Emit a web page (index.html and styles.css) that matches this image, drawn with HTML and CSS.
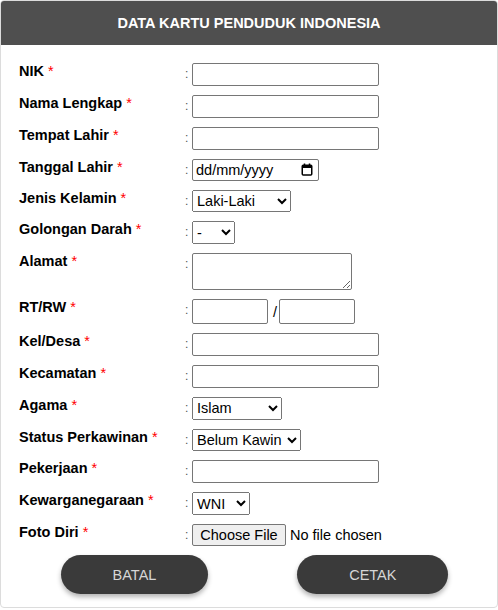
FILE: index.html
```html
<!DOCTYPE html>
<html lang="id">
<head>
<meta charset="utf-8">
<title>Data Kartu Penduduk Indonesia</title>
<link rel="stylesheet" href="styles.css">
</head>
<body>
<div class="card">
  <div class="card-header">DATA KARTU PENDUDUK INDONESIA</div>
  <form class="card-body">
    <div class="row">
      <label class="lbl">NIK <span class="req">*</span></label>
      <span class="colon">:</span>
      <input class="txt" type="text">
    </div>
    <div class="row">
      <label class="lbl">Nama Lengkap <span class="req">*</span></label>
      <span class="colon">:</span>
      <input class="txt" type="text">
    </div>
    <div class="row">
      <label class="lbl">Tempat Lahir <span class="req">*</span></label>
      <span class="colon">:</span>
      <input class="txt" type="text">
    </div>
    <div class="row">
      <label class="lbl">Tanggal Lahir <span class="req">*</span></label>
      <span class="colon">:</span>
      <div class="date-field">
        <span>dd/mm/yyyy</span>
        <svg class="cal" width="12" height="13" viewBox="0 0 12 13">
          <rect x="1.25" y="2.25" width="9.5" height="9.75" rx="1" fill="none" stroke="#000" stroke-width="1.5"/>
          <rect x="1" y="2" width="10" height="3" fill="#000"/>
          <rect x="2.75" y="0.5" width="1.5" height="2.5" fill="#000"/>
          <rect x="7.75" y="0.5" width="1.5" height="2.5" fill="#000"/>
        </svg>
      </div>
    </div>
    <div class="row">
      <label class="lbl">Jenis Kelamin <span class="req">*</span></label>
      <span class="colon">:</span>
      <select class="sel sel-jk"><option>Laki-Laki</option><option>Perempuan</option></select>
    </div>
    <div class="row">
      <label class="lbl">Golongan Darah <span class="req">*</span></label>
      <span class="colon">:</span>
      <select class="sel sel-gol"><option>-</option><option>A</option><option>B</option><option>AB</option><option>O</option></select>
    </div>
    <div class="row">
      <label class="lbl">Alamat <span class="req">*</span></label>
      <span class="colon">:</span>
      <textarea class="area"></textarea>
    </div>
    <div class="row">
      <label class="lbl">RT/RW <span class="req">*</span></label>
      <span class="colon">:</span>
      <div class="rtrw">
        <input class="txt small" type="text">
        <span class="slash">/</span>
        <input class="txt small" type="text">
      </div>
    </div>
    <div class="row">
      <label class="lbl">Kel/Desa <span class="req">*</span></label>
      <span class="colon">:</span>
      <input class="txt" type="text">
    </div>
    <div class="row">
      <label class="lbl">Kecamatan <span class="req">*</span></label>
      <span class="colon">:</span>
      <input class="txt" type="text">
    </div>
    <div class="row">
      <label class="lbl">Agama <span class="req">*</span></label>
      <span class="colon">:</span>
      <select class="sel sel-agama"><option>Islam</option><option>Kristen</option><option>Katolik</option><option>Hindu</option><option>Buddha</option><option>Konghucu</option></select>
    </div>
    <div class="row">
      <label class="lbl">Status Perkawinan <span class="req">*</span></label>
      <span class="colon">:</span>
      <select class="sel sel-status"><option>Belum Kawin</option><option>Kawin</option><option>Cerai Hidup</option><option>Cerai Mati</option></select>
    </div>
    <div class="row">
      <label class="lbl">Pekerjaan <span class="req">*</span></label>
      <span class="colon">:</span>
      <input class="txt" type="text">
    </div>
    <div class="row">
      <label class="lbl">Kewarganegaraan <span class="req">*</span></label>
      <span class="colon">:</span>
      <select class="sel sel-wn"><option>WNI</option><option>WNA</option></select>
    </div>
    <div class="row">
      <label class="lbl">Foto Diri <span class="req">*</span></label>
      <span class="colon">:</span>
      <div class="file-field">
        <span class="file-btn">Choose File</span>
        <span class="file-name">No file chosen</span>
      </div>
    </div>
    <div class="actions">
      <button type="button" class="btn btn-batal">BATAL</button>
      <button type="button" class="btn btn-cetak">CETAK</button>
    </div>
  </form>
</div>
</body>
</html>
```

FILE: styles.css
```css
html, body {
  margin: 0;
  padding: 0;
  background: #fff;
}

body {
  font-family: "Liberation Sans", Arial, sans-serif;
  font-size: 14.5px;
  color: #000;
}

.card {
  box-sizing: border-box;
  width: 498px;
  height: 608px;
  border: 1px solid #dcdcdc;
  border-radius: 4px;
  overflow: hidden;
  background: #fff;
}

.card-header {
  height: 44px;
  background: #4f4f4f;
  color: #fff;
  font-weight: bold;
  font-size: 14.5px;
  display: flex;
  align-items: center;
  justify-content: center;
}

.card-body {
  margin: 0;
  padding: 17.7px 18px 14px 18px;
  display: flex;
  flex-direction: column;
  gap: 9px;
}

.row {
  display: flex;
  align-items: flex-start;
}

.lbl {
  width: 166px;
  flex: none;
  font-weight: bold;
  line-height: normal;
}

.req {
  color: #f00;
  font-weight: normal;
}

.colon {
  width: 7px;
  flex: none;
  font-size: 12px;
  line-height: 12px;
  margin-top: 5px;
  color: #555;
}

.txt {
  box-sizing: border-box;
  width: 187px;
  height: 23px;
  margin: 0;
  padding: 1px 3px;
  border: 1px solid #767676;
  border-radius: 2px;
  font-family: inherit;
  font-size: 14.5px;
  background: #fff;
}

.txt.small {
  width: 76px;
  height: 25px;
}

.rtrw {
  display: flex;
  align-items: center;
}

.slash {
  margin: 0 2px 0 5px;
  font-size: 14.5px;
}

.date-field {
  box-sizing: border-box;
  width: 127px;
  height: 22px;
  border: 1px solid #767676;
  border-radius: 2px;
  display: flex;
  align-items: center;
  justify-content: space-between;
  padding: 0 5px 0 3px;
  font-size: 14.5px;
}

.cal {
  display: block;
}

.sel {
  box-sizing: border-box;
  height: 22.7px;
  margin: 0;
  font-family: inherit;
  font-size: 14.5px;
  color: #000;
}

.sel-jk { width: 99px; }
.sel-gol { width: 43px; }
.sel-agama { width: 90px; }
.sel-status { width: 109px; }
.sel-wn { width: 58px; }

.area {
  box-sizing: border-box;
  width: 160px;
  height: 37px;
  margin: 0;
  border: 1px solid #767676;
  border-radius: 2px;
  font-family: inherit;
  font-size: 14.5px;
}

.file-field {
  display: flex;
  align-items: center;
  height: 22px;
}

.file-btn {
  box-sizing: border-box;
  height: 22px;
  width: 94px;
  display: flex;
  align-items: center;
  justify-content: center;
  background: #efefef;
  border: 1px solid #767676;
  border-radius: 2px;
  font-size: 14.5px;
}

.file-name {
  margin-left: 4px;
  font-size: 14.5px;
}

.actions {
  display: flex;
  justify-content: space-between;
  padding: 0 30.7px 0 42px;
}

.btn {
  height: 39px;
  border: none;
  border-radius: 20px;
  background: #3a3a3a;
  color: #d6d6d6;
  font-family: inherit;
  font-size: 14.5px;
  box-shadow: 0 3px 5px rgba(0, 0, 0, 0.3);
  cursor: pointer;
}

.btn-batal { width: 147px; }
.btn-cetak { width: 151px; }
```
